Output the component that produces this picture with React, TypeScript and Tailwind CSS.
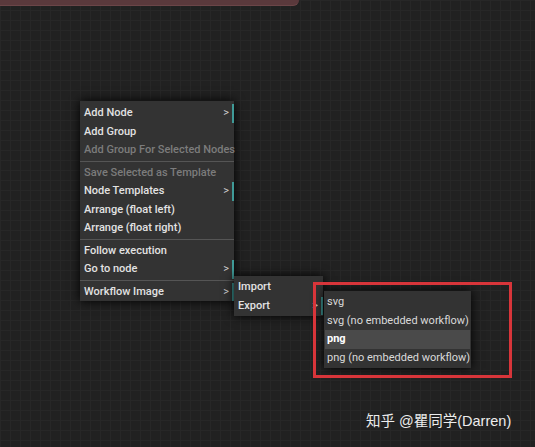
import React from 'react';

type Entry = {
  label: string;
  disabled?: boolean;
  submenu?: boolean;
  sep?: boolean;
};

const mainItems: Entry[] = [
  { label: 'Add Node', submenu: true },
  { label: 'Add Group' },
  { label: 'Add Group For Selected Nodes', disabled: true },
  { label: '', sep: true },
  { label: 'Save Selected as Template', disabled: true },
  { label: 'Node Templates', submenu: true },
  { label: 'Arrange (float left)' },
  { label: 'Arrange (float right)' },
  { label: '', sep: true },
  { label: 'Follow execution' },
  { label: 'Go to node', submenu: true },
  { label: '', sep: true },
  { label: 'Workflow Image', submenu: true },
];

const exportItems = [
  { label: 'svg' },
  { label: 'svg (no embedded workflow)' },
  { label: 'png', active: true },
  { label: 'png (no embedded workflow)' },
];

const MenuRow = ({ item }: { item: Entry }) => {
  if (item.sep) {
    return (
      <div className="h-[4px] flex items-center">
        <div className="h-px w-full bg-[#555]" />
      </div>
    );
  }
  return (
    <div
      className={`relative h-[18.5px] flex items-center pl-[4px] pr-[14px] whitespace-nowrap ${
        item.disabled ? 'text-[#7c7c7c]' : 'text-[#e2e2e2]'
      } ${item.submenu ? 'border-r-2 border-[#3f9a97]' : ''}`}
    >
      {item.label}
      {item.submenu && (
        <span className="absolute right-[3px] top-0 h-full flex items-center text-[#cfcfcf] font-normal">
          &gt;
        </span>
      )}
    </div>
  );
};

export default function App() {
  return (
    <div
      className="relative w-[535px] h-[447px] overflow-hidden bg-[#212121] bg-[linear-gradient(to_right,#272727_1px,transparent_1px),linear-gradient(to_bottom,#272727_1px,transparent_1px)] bg-[size:10px_10px]"
      style={{ fontFamily: 'Roboto, "Noto Sans", sans-serif' }}
    >
      {/* node peeking in at the top */}
      <div className="absolute left-0 top-0 w-[299px] h-[6px] bg-[#5a393c] border-b border-[#6b4548] rounded-br-[6px]" />

      {/* main context menu */}
      <div className="absolute left-[80px] top-[101px] w-[154px] pt-[3px] bg-[#333333] shadow-[0_0_10px_#000] text-[11px] font-medium">
        {mainItems.map((item, i) => (
          <MenuRow key={i} item={item} />
        ))}
      </div>

      {/* Workflow Image submenu */}
      <div className="absolute left-[234px] top-[276px] w-[89px] pt-[2px] pb-[1px] bg-[#333333] shadow-[0_0_10px_#000] text-[11px] font-medium">
        <MenuRow item={{ label: 'Import' }} />
        <MenuRow item={{ label: 'Export', submenu: true }} />
      </div>

      {/* Export submenu */}
      <div className="absolute left-[324px] top-[291px] w-[147px] pt-[2px] pb-[1px] px-[1px] bg-[#333333] shadow-[0_0_10px_#000] text-[11px] flex flex-col">
        {exportItems.map((it) => (
          <div
            key={it.label}
            className={`h-[18.5px] flex items-center pl-[2px] whitespace-nowrap ${
              it.active ? 'bg-[#4a4a4a] text-white font-bold' : 'text-[#dadada]'
            }`}
          >
            {it.label}
          </div>
        ))}
      </div>

      {/* annotation box */}
      <div className="absolute left-[313px] top-[282px] w-[199px] h-[96px] border-[3px] border-[#d8353a]" />

      {/* watermark */}
      <div
        className="absolute left-[366px] top-[411px] text-[14.5px] text-[#ececec] whitespace-nowrap"
        style={{ fontFamily: '"Liberation Sans", "Noto Sans CJK SC", sans-serif' }}
      >
        知乎 @瞿同学(Darren)
      </div>
    </div>
  );
}
